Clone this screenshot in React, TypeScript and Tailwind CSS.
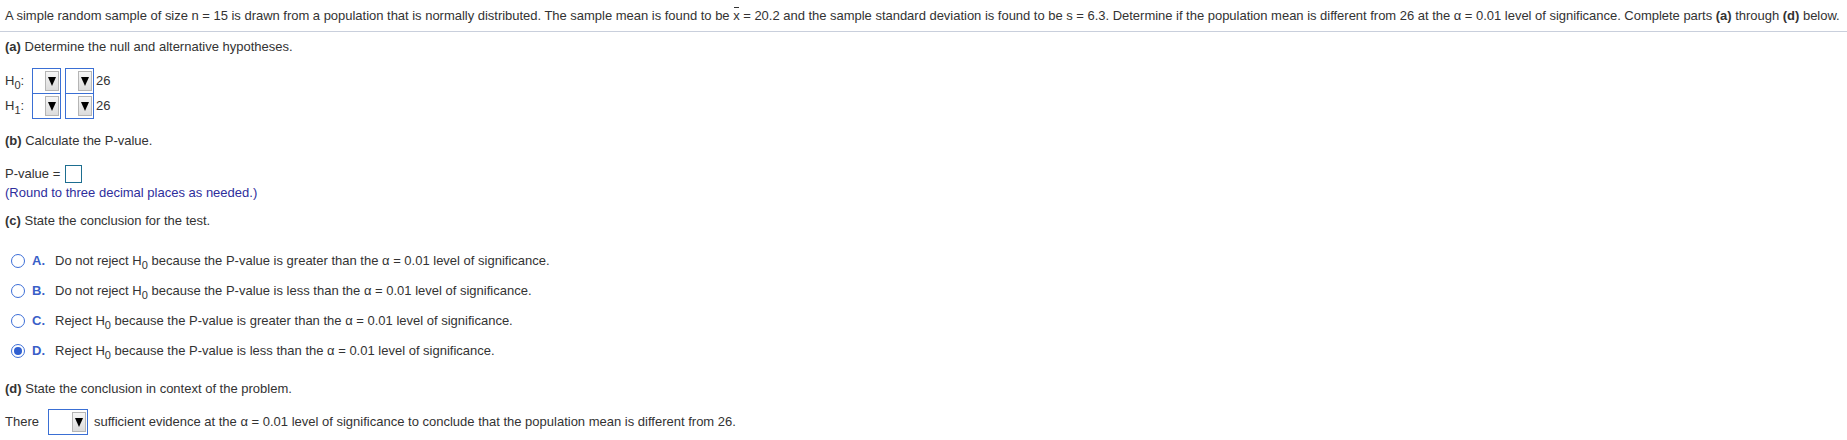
import React from "react";

// Small dropdown with the grey arrow button on the right
function Dropdown({ w = "w-[29px]" }: { w?: string }) {
	return (
		<span
			className={`inline-flex ${w} h-[26px] items-center justify-end border border-[#3a6fd4] bg-white pr-[1px] align-middle`}
		>
			<span className="flex h-[20px] w-[14px] items-center justify-center border border-[#b5b5b5] bg-gradient-to-b from-[#f6f6f6] to-[#dcdcdc]">
				<svg width="8" height="9" viewBox="0 0 8 9">
					<path d="M0 0 H8 L4 9 Z" fill="#000" />
				</svg>
			</span>
		</span>
	);
}

function H({ sub }: { sub: string }) {
	return (
		<span>
			H<span className="relative top-[4px] text-[11px]">{sub}</span>
		</span>
	);
}

const Alpha = () => <span>α</span>;

function Option({
	letter,
	selected,
	children,
}: {
	letter: string;
	selected?: boolean;
	children: React.ReactNode;
}) {
	return (
		<div className="flex h-[30px] items-center">
			<span className="ml-[6px] flex h-[14px] w-[14px] items-center justify-center rounded-full border border-[#3d6fd8] bg-white">
				{selected && <span className="h-[8px] w-[8px] rounded-full bg-[#2f5fd0]" />}
			</span>
			<span className="ml-[7px] w-[23px] font-bold text-[#3a5fc8]">{letter}</span>
			<span>{children}</span>
		</div>
	);
}

export default function App() {
	return (
		<div className="min-h-[440px] w-[1847px] bg-white font-['Liberation_Sans',Arial,sans-serif] text-[13px] leading-[16px] text-[#333]">
			{/* Problem statement */}
			<div className="h-[32px] whitespace-nowrap border-b border-[#c9cfdc] pl-[5px] leading-[31px] tracking-[-0.02px]">
				A simple random sample of size n = 15 is drawn from a population that is normally distributed. The
				sample mean is found to be{" "}
				<span className="relative inline-block">
					x
					<span className="absolute left-[1px] top-[7px] h-[1px] w-[5px] bg-[#333]" />
				</span>{" "}
				= 20.2 and the sample standard deviation is found to be s = 6.3. Determine if the population mean is
				different from 26 at the <Alpha /> = 0.01 level of significance. Complete parts <b>(a)</b> through{" "}
				<b>(d)</b> below.
			</div>

			<div className="pl-[5px]">
				{/* (a) */}
				<div className="mt-[7px]">
					<b>(a)</b> Determine the null and alternative hypotheses.
				</div>
				<div className="mt-[13px] flex flex-col">
					{["0", "1"].map((s) => (
						<div key={s} className="-mb-[1px] flex items-center">
							<span className="w-[27px]">
								<H sub={s} />:
							</span>
							<Dropdown />
							<span className="w-[4px]" />
							<Dropdown />
							<span className="ml-[2px]">26</span>
						</div>
					))}
				</div>

				{/* (b) */}
				<div className="mt-[15px]">
					<b>(b)</b> Calculate the P-value.
				</div>
				<div className="mt-[16px] flex items-center">
					P-value =
					<span className="ml-[5px] inline-block h-[18px] w-[17px] border border-[#1d6e90] bg-white" />
				</div>
				<div className="mt-[2px] text-[#2e2e9c]">(Round to three decimal places as needed.)</div>

				{/* (c) */}
				<div className="mt-[12px]">
					<b>(c)</b> State the conclusion for the test.
				</div>
				<div className="mt-[17px]">
					<Option letter="A.">
						Do not reject <H sub="0" /> because the P-value is greater than the <Alpha /> = 0.01 level of
						significance.
					</Option>
					<Option letter="B.">
						Do not reject <H sub="0" /> because the P-value is less than the <Alpha /> = 0.01 level of
						significance.
					</Option>
					<Option letter="C.">
						Reject <H sub="0" /> because the P-value is greater than the <Alpha /> = 0.01 level of
						significance.
					</Option>
					<Option letter="D." selected>
						Reject <H sub="0" /> because the P-value is less than the <Alpha /> = 0.01 level of significance.
					</Option>
				</div>

				{/* (d) */}
				<div className="mt-[15px]">
					<b>(d)</b> State the conclusion in context of the problem.
				</div>
				<div className="mt-[12px] flex items-center">
					<span>There</span>
					<span className="ml-[9px]">
						<Dropdown w="w-[40px]" />
					</span>
					<span className="ml-[6px]">
						sufficient evidence at the <Alpha /> = 0.01 level of significance to conclude that the population
						mean is different from 26.
					</span>
				</div>
			</div>
		</div>
	);
}
